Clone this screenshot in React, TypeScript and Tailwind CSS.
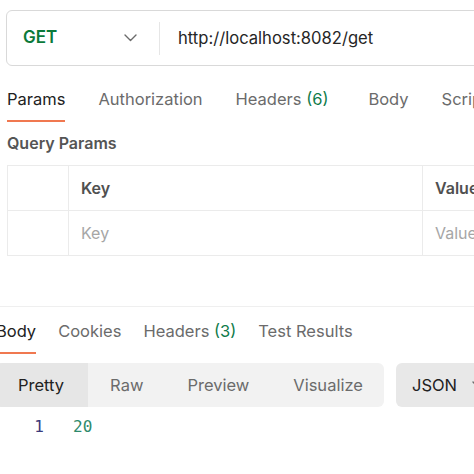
import React from "react";

const requestTabs = [
  { label: "Params", active: true },
  { label: "Authorization" },
  { label: "Headers", count: 6 },
  { label: "Body" },
  { label: "Scripts" },
];

const responseTabs = [
  { label: "Body", active: true },
  { label: "Cookies" },
  { label: "Headers", count: 3 },
  { label: "Test Results" },
];

const views = ["Pretty", "Raw", "Preview", "Visualize"];

function Chevron({ className = "" }: { className?: string }) {
  return (
    <svg width="13" height="8" viewBox="0 0 13 8" fill="none" className={className}>
      <path d="M1 1l5.5 5.5L12 1" stroke="#6b6b6b" strokeWidth="1.4" strokeLinecap="round" strokeLinejoin="round" />
    </svg>
  );
}

export default function App() {
  return (
    <div className="w-[474px] h-[474px] overflow-hidden bg-white font-['Inter',sans-serif] text-[#212121]">
      {/* url bar */}
      <div className="pl-[6px] pt-[10px]">
        <div className="flex items-center h-[56px] w-[520px] border border-[#d9d9d9] rounded-[6px]">
          <div className="flex items-center w-[152px] pl-[16px] pr-[22px]">
            <span className="text-[17px] font-semibold text-[#0b7a3a]">GET</span>
            <Chevron className="ml-auto" />
          </div>
          <div className="w-px h-[33px] bg-[#e6e6e6]" />
          <span className="pl-[18px] text-[16.6px] text-[#262626]">http://localhost:8082/get</span>
        </div>
      </div>

      {/* request tabs */}
      <div className="flex whitespace-nowrap mt-[21px] pl-[7px] gap-[33px]">
        {requestTabs.map((t) => (
          <div key={t.label} className={`flex flex-col ${t.count !== undefined ? "pr-[7px]" : ""}`}>
            <div className={`text-[16.5px] leading-[24px] ${t.active ? "text-[#212121]" : "text-[#6b6b6b]"}`}>
              {t.label}
              {t.count !== undefined && <span className="text-[#0f7b4a]"> ({t.count})</span>}
            </div>
            <div className={`h-[2px] mt-[9px] ${t.active ? "bg-[#f07850]" : "bg-transparent"}`} />
          </div>
        ))}
      </div>

      <div className="pl-[7px] mt-[10px] text-[16px] font-semibold text-[#555] leading-[22px]">Query Params</div>

      {/* params table */}
      <div className="ml-[7px] mt-[11px] w-[520px] border border-[#ebebeb] grid grid-cols-[61px_354px_1fr] text-[16px]">
        <div className="h-[45px] border-r border-b border-[#ebebeb]" />
        <div className="h-[45px] border-r border-b border-[#ebebeb] flex items-center pl-[12px] font-semibold text-[#505050]">Key</div>
        <div className="h-[45px] border-b border-[#ebebeb] flex items-center pl-[12px] font-semibold text-[#505050]">Value</div>
        <div className="h-[44px] border-r border-[#ebebeb]" />
        <div className="h-[44px] border-r border-[#ebebeb] flex items-center pl-[12px] text-[#a6a6a6]">Key</div>
        <div className="h-[44px] flex items-center pl-[12px] text-[#a6a6a6]">Value</div>
      </div>

      <div className="mt-[50px] h-px bg-[#efefef]" />

      {/* response */}
      <div className="-ml-[4px]">
        <div className="flex whitespace-nowrap mt-[12px] gap-[22px]">
          {responseTabs.map((t) => (
            <div key={t.label} className="flex flex-col">
              <div className={`text-[16.5px] leading-[24px] ${t.active ? "text-[#212121]" : "text-[#6b6b6b]"}`}>
                {t.label}
                {t.count !== undefined && <span className="text-[#0f7b4a]"> ({t.count})</span>}
              </div>
              <div className={`h-[2px] mt-[9px] ${t.active ? "bg-[#f07850]" : "bg-transparent"}`} />
            </div>
          ))}
        </div>

        <div className="flex items-center mt-[9px] gap-[12px]">
          <div className="flex shrink-0 h-[44px] w-[388px] bg-[#f2f2f2] rounded-[6px] overflow-hidden">
            {views.map((v, i) => (
              <div
                key={v}
                className={`flex items-center text-[16.5px] ${i === 0 ? "bg-[#e6e6e6] text-[#212121] pl-[22px] pr-[24px]" : "px-[22px] text-[#6b6b6b]"}`}
              >
                {v}
              </div>
            ))}
          </div>
          <div className="flex shrink-0 items-center gap-[15px] h-[44px] w-[100px] bg-[#e8e8e8] rounded-[6px] pl-[16px] text-[16.5px] text-[#212121]">
            JSON
            <Chevron />
          </div>
        </div>

        <div className="flex mt-[10px] font-['DejaVu_Sans_Mono',monospace] text-[16px] leading-[20px]">
          <span className="w-[48px] text-right text-[#3a3a7c]">1</span>
          <span className="ml-[29px] text-[#2e8a6c]">20</span>
        </div>
      </div>
    </div>
  );
}
